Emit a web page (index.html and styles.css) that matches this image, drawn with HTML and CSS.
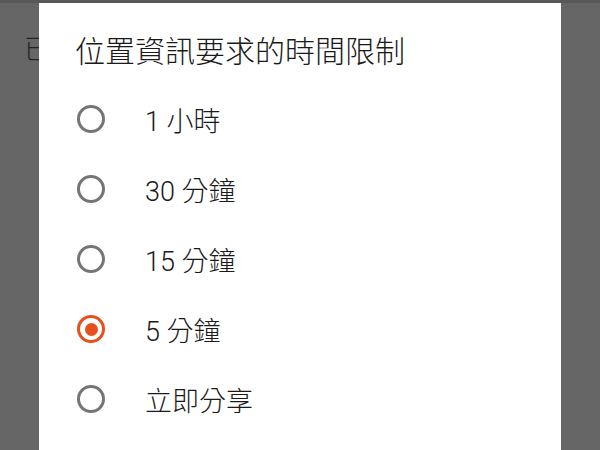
FILE: index.html
```html
<!DOCTYPE html>
<html>

<head>
  <title>位置資訊要求</title>
  <link rel="stylesheet" href="styles.css">
</head>

<body>
  <div class="page">
    <p class="behind">已</p>
  </div>

  <div class="dialog">
    <h1 class="dialog-title">位置資訊要求的時間限制</h1>
    <ul class="options">
      <li class="option"><span class="radio"></span><span class="label">1 小時</span></li>
      <li class="option"><span class="radio"></span><span class="label">30 分鐘</span></li>
      <li class="option"><span class="radio"></span><span class="label">15 分鐘</span></li>
      <li class="option"><span class="radio radio-checked"></span><span class="label">5 分鐘</span></li>
      <li class="option"><span class="radio"></span><span class="label">立即分享</span></li>
    </ul>
  </div>
</body>

</html>
```

FILE: styles.css
```css
html,
body {
  margin: 0;
  height: 100%;
}

body {
  background-color: #666;
  font-family: Roboto, "Noto Sans CJK TC", sans-serif;
  font-weight: 300;
  overflow: hidden;
  border-top: 3px solid #585858;
  box-sizing: border-box;
}

.page {
  padding: 32px 0 0 24px;
}

.behind {
  margin: 0;
  font-size: 27px;
  line-height: 30px;
  color: #222;
}

.dialog {
  position: absolute;
  top: 3px;
  left: 39px;
  width: 522px;
  height: 460px;
  background-color: #fff;
  box-sizing: border-box;
  padding: 20px 36px 0;
}

.dialog-title {
  margin: 0;
  font-size: 30px;
  font-weight: 300;
  line-height: 58px;
  color: #1a1a1a;
}

.options {
  list-style: none;
  margin: 3px 0 0;
  padding: 0;
}

.option {
  display: flex;
  align-items: center;
  height: 70px;
}

.radio {
  flex: none;
  display: flex;
  align-items: center;
  justify-content: center;
  width: 28px;
  height: 28px;
  margin: 0 40px 0 2px;
  box-sizing: border-box;
  border: 3px solid #757575;
  border-radius: 50%;
}

.radio-checked {
  border-color: #e6501c;
}

.radio-checked::after {
  content: "";
  width: 13px;
  height: 13px;
  border-radius: 50%;
  background-color: #e6501c;
}

.label {
  font-size: 27px;
  color: #1a1a1a;
}
```
